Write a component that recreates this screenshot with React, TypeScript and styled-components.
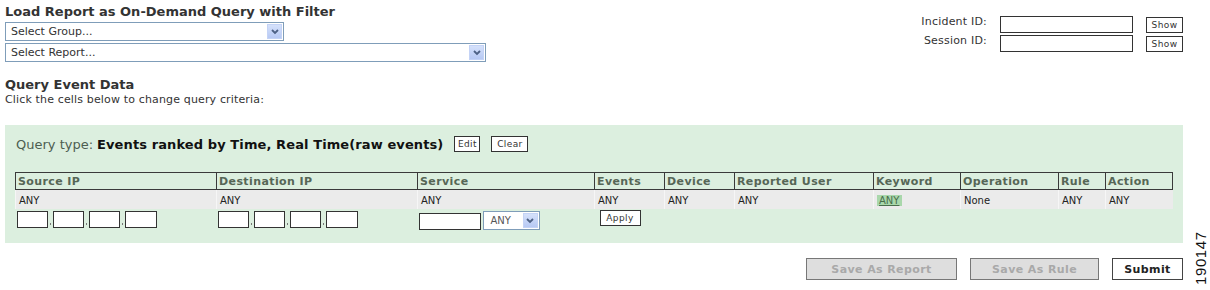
import React from "react";
import styled, { createGlobalStyle } from "styled-components";

const Global = createGlobalStyle`
  html, body { margin: 0; padding: 0; background: #fff; }
  body { font-family: "DejaVu Sans", Verdana, sans-serif; color: #333; }
`;

const Page = styled.div`
  position: relative;
  width: 1210px;
  height: 290px;
  padding: 0 27px 0 5px;
  box-sizing: border-box;
`;

const Top = styled.div`
  display: flex;
  justify-content: space-between;
  align-items: flex-start;
`;

const LeftCol = styled.div`
  display: flex;
  flex-direction: column;
  padding-top: 4px;
`;

const Title = styled.div<{ $size?: number }>`
  font-weight: bold;
  font-size: ${(p) => p.$size ?? 13}px;
  line-height: 16px;
  color: #333;
  white-space: nowrap;
`;

const SelectBox = styled.div<{ $w: number; $mt?: number }>`
  width: ${(p) => p.$w}px;
  height: 19px;
  margin-top: ${(p) => p.$mt ?? 2}px;
  box-sizing: border-box;
  border: 1px solid #7f9db9;
  background: #fff;
  display: flex;
  align-items: center;
  justify-content: space-between;
  padding: 0 1px 0 5px;
  font-size: 11px;
  color: #333;
`;

const ArrowBtn = styled.span`
  width: 15px;
  height: 15px;
  background: linear-gradient(#d5e1fb, #b7c9f4);
  border: 1px solid #c4d3f6;
  box-sizing: border-box;
  display: flex;
  align-items: center;
  justify-content: center;
`;

const Arrow = () => (
  <ArrowBtn>
    <svg width="8" height="6" viewBox="0 0 8 6">
      <path d="M1 1 L4 4 L7 1" stroke="#4d6185" strokeWidth="1.8" fill="none" />
    </svg>
  </ArrowBtn>
);

const IdForm = styled.div`
  display: grid;
  grid-template-columns: auto 133px 37px;
  column-gap: 13px;
  row-gap: 2px;
  align-items: center;
  padding-top: 16px;
`;

const IdLabel = styled.div`
  font-size: 11px;
  text-align: right;
  color: #333;
  margin-top: -6px;
  letter-spacing: 0.2px;
`;

const TextBox = styled.div<{ $w: number; $h?: number }>`
  width: ${(p) => p.$w}px;
  height: ${(p) => p.$h ?? 17}px;
  box-sizing: border-box;
  border: 1px solid #333;
  background: #fff;
`;

const SmallBtn = styled.div<{ $w: number }>`
  width: ${(p) => p.$w}px;
  height: 16px;
  box-sizing: border-box;
  border: 1px solid #333;
  background: #fff;
  font-size: 9px;
  letter-spacing: 0.4px;
  color: #333;
  display: flex;
  align-items: center;
  justify-content: center;
`;

const Sub = styled.div`
  font-size: 11px;
  line-height: 13px;
  color: #333;
  letter-spacing: 0.15px;
`;

const Section = styled.div`
  margin-top: 15px;
`;

const Panel = styled.div`
  margin-top: 19px;
  width: 1178px;
  height: 118px;
  box-sizing: border-box;
  background: #dcefdf;
  padding: 11px 11px 0 10px;
`;

const QueryRow = styled.div`
  display: flex;
  align-items: center;
  height: 16px;
  padding-left: 1px;
`;

const QLabel = styled.span`
  font-size: 13px;
  color: #4d5e51;
  white-space: nowrap;
`;

const QValue = styled.span`
  font-size: 13px;
  font-weight: bold;
  color: #111;
  white-space: nowrap;
  margin-left: 4px;
  margin-right: 11px;
  letter-spacing: 0.1px;
`;

const PanelBtn = styled(SmallBtn)`
  margin-right: 11px;
`;

const Table = styled.table`
  margin-top: 20px;
  width: 1157px;
  border-collapse: collapse;
  table-layout: fixed;
`;

const Th = styled.th`
  height: 16px;
  border: 1px solid #3a3a3a;
  text-align: left;
  padding: 0 0 0 2px;
  font-size: 11px;
  font-weight: bold;
  color: #566656;
  letter-spacing: 0.4px;
  white-space: nowrap;
`;

const DataRow = styled.tr`
  background: #ebebeb;
`;

const Td = styled.td`
  height: 18px;
  padding: 1px 0 0 3px;
  font-size: 10px;
  color: #222;
  border-left: 1px solid #f6f6f6;
  white-space: nowrap;
`;

const InputTd = styled.td`
  height: 19px;
  padding: 2px 0 0 1px;
  vertical-align: top;
`;

const Cluster = styled.div`
  display: flex;
  align-items: flex-end;
`;

const Dot = styled.span`
  width: 5px;
  height: 17px;
  display: flex;
  align-items: flex-end;
  justify-content: center;
  padding-bottom: 3px;
  box-sizing: border-box;
  &::after {
    content: "";
    width: 1px;
    height: 2px;
    background: #777;
  }
`;

const KeywordLink = styled.span`
  background: #a9d7ab;
  color: #4a6e4c;
  text-decoration: underline;
  padding: 0 3px 0 2px;
`;

const MiniSelect = styled.div`
  width: 57px;
  height: 19px;
  margin-left: 2px;
  box-sizing: border-box;
  border: 1px solid #7f9db9;
  background: #fff;
  display: flex;
  align-items: center;
  justify-content: space-between;
  padding: 0 1px 0 7px;
  font-size: 10px;
  color: #555;
`;

const ApplyBtn = styled(SmallBtn)`
  margin-left: 4px;
  margin-top: -1px;
`;

const Actions = styled.div`
  margin-top: 15px;
  width: 1178px;
  display: flex;
  justify-content: flex-end;
  gap: 13px;
`;

const BigBtn = styled.div<{ $w: number; $disabled?: boolean }>`
  width: ${(p) => p.$w}px;
  height: 22px;
  box-sizing: border-box;
  border: 1px solid ${(p) => (p.$disabled ? "#777" : "#444")};
  background: ${(p) => (p.$disabled ? "#dedede" : "#fff")};
  color: ${(p) => (p.$disabled ? "#a9a9a9" : "#222")};
  font-size: 11px;
  font-weight: bold;
  letter-spacing: 0.4px;
  display: flex;
  align-items: center;
  justify-content: center;
`;

const FigNum = styled.div`
  position: absolute;
  left: 1193px;
  top: 285px;
  transform: rotate(-90deg);
  transform-origin: 0 0;
  font-family: "Liberation Sans", Arial, sans-serif;
  font-size: 15px;
  line-height: 15px;
  letter-spacing: 0.6px;
  color: #111;
  white-space: nowrap;
`;

const cols = [
  { name: "Source IP", w: 201 },
  { name: "Destination IP", w: 201 },
  { name: "Service", w: 177 },
  { name: "Events", w: 70 },
  { name: "Device", w: 70 },
  { name: "Reported User", w: 139 },
  { name: "Keyword", w: 87 },
  { name: "Operation", w: 98 },
  { name: "Rule", w: 47 },
  { name: "Action", w: 67 },
];

const values = ["ANY", "ANY", "ANY", "ANY", "ANY", "ANY", "KEY", "None", "ANY", "ANY"];

const IpInputs = () => (
  <Cluster>
    <TextBox $w={31} />
    <Dot />
    <TextBox $w={31} />
    <Dot />
    <TextBox $w={31} />
    <Dot />
    <TextBox $w={32} />
  </Cluster>
);

export default function App() {
  return (
    <Page>
      <Global />
      <Top>
        <LeftCol>
          <Title $size={13}>Load Report as On-Demand Query with Filter</Title>
          <SelectBox $w={279}>
            <span>Select Group...</span>
            <Arrow />
          </SelectBox>
          <SelectBox $w={481}>
            <span>Select Report...</span>
            <Arrow />
          </SelectBox>
        </LeftCol>
        <IdForm>
          <IdLabel>Incident ID:</IdLabel>
          <TextBox $w={133} $h={17} />
          <SmallBtn $w={37}>Show</SmallBtn>
          <IdLabel>Session ID:</IdLabel>
          <TextBox $w={133} $h={17} />
          <SmallBtn $w={37}>Show</SmallBtn>
        </IdForm>
      </Top>
      <Section>
        <Title>Query Event Data</Title>
        <Sub>Click the cells below to change query criteria:</Sub>
      </Section>
      <Panel>
        <QueryRow>
          <QLabel>Query type:</QLabel>
          <QValue>Events ranked by Time, Real Time(raw events)</QValue>
          <PanelBtn $w={26}>Edit</PanelBtn>
          <PanelBtn $w={37}>Clear</PanelBtn>
        </QueryRow>
        <Table>
          <colgroup>
            {cols.map((c) => (
              <col key={c.name} style={{ width: c.w }} />
            ))}
          </colgroup>
          <thead>
            <tr>
              {cols.map((c) => (
                <Th key={c.name}>{c.name}</Th>
              ))}
            </tr>
          </thead>
          <tbody>
            <DataRow>
              {values.map((v, i) => (
                <Td key={i}>{v === "KEY" ? <KeywordLink>ANY</KeywordLink> : v}</Td>
              ))}
            </DataRow>
            <tr>
              <InputTd>
                <IpInputs />
              </InputTd>
              <InputTd>
                <IpInputs />
              </InputTd>
              <InputTd>
                <Cluster>
                  <TextBox $w={62} />
                  <MiniSelect>
                    <span>ANY</span>
                    <Arrow />
                  </MiniSelect>
                </Cluster>
              </InputTd>
              <InputTd>
                <ApplyBtn $w={41}>Apply</ApplyBtn>
              </InputTd>
              <InputTd />
              <InputTd />
              <InputTd />
              <InputTd />
              <InputTd />
              <InputTd />
            </tr>
          </tbody>
        </Table>
      </Panel>
      <Actions>
        <BigBtn $w={151} $disabled>Save As Report</BigBtn>
        <BigBtn $w={129} $disabled>Save As Rule</BigBtn>
        <BigBtn $w={71}>Submit</BigBtn>
      </Actions>
      <FigNum>190147</FigNum>
    </Page>
  );
}
